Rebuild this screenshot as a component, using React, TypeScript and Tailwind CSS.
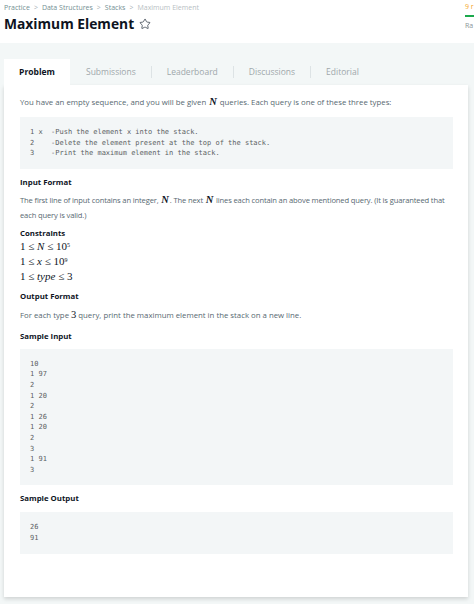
import { Star } from "lucide-react";

const sans = "font-['Open_Sans','Liberation_Sans',sans-serif]";
const mono = "font-['DejaVu_Sans_Mono','Liberation_Mono',monospace]";
const math = "font-['Liberation_Serif',serif]";

const tabs = ["Submissions", "Leaderboard", "Discussions", "Editorial"];

const sampleInput = ["10", "1 97", "2", "1 20", "2", "1 26", "1 20", "2", "3", "1 91", "3"];

function CodeBlock({ lines }: { lines: string[] }) {
  return (
    <pre
      className={`${mono} bg-[#f3f6f7] text-[#5b5f63] text-[7px] leading-[10.6px] px-[10px] py-[10px] whitespace-pre`}
    >
      {lines.join("\n")}
    </pre>
  );
}

function SectionTitle({ children }: { children: string }) {
  return <h3 className="text-[7.8px] font-bold text-[#0e141e] leading-[12px]">{children}</h3>;
}

function MathN() {
  return (
    <span className="inline-block px-[1px]">
      <i className={`${math} text-[10.5px] leading-none font-bold text-[#0e141e]`}>N</i>
    </span>
  );
}

export default function App() {
  return (
    <div className={`${sans} w-[474px] h-[604px] overflow-hidden bg-white flex flex-col`}>
      {/* Header */}
      <div className="relative h-[43px] px-[4px] pt-[3px]">
        <div className="flex items-center gap-[4px] text-[7px] leading-[9px] text-[#738f93]">
          <span>Practice</span>
          <span className="text-[#a8b2b5]">&gt;</span>
          <span>Data Structures</span>
          <span className="text-[#a8b2b5]">&gt;</span>
          <span>Stacks</span>
          <span className="text-[#a8b2b5]">&gt;</span>
          <span className="text-[#b7c0c3]">Maximum Element</span>
        </div>
        <div className="flex items-center gap-[5px] mt-[2px]">
          <h1 className="text-[13.8px] font-bold text-[#0e141e] leading-[20px]">Maximum Element</h1>
          <Star size={12} strokeWidth={1.6} className="text-[#39424e]" />
        </div>
        <div className="absolute left-[465px] top-[2px] w-[20px]">
          <div className="text-[7px] leading-[9px] text-[#f5a623]">9 r</div>
          <div className="h-[2px] bg-[#1ba94c] mt-[4px]" />
          <div className="text-[7px] leading-[9px] text-[#8a9497] mt-[4px]">Ra</div>
        </div>
      </div>

      {/* Body */}
      <div className="flex-1 bg-[#f3f7f7] px-[4px] pt-[16px]">
        <div className="flex items-stretch h-[26px]">
          <div className="w-[66px] bg-white flex items-center justify-center text-[8.5px] font-bold text-[#0e141e]">
            Problem
          </div>
          <div className="flex items-center pl-[16px]">
            {tabs.map((t, i) => (
              <div key={t} className="flex items-center">
                {i > 0 && <div className="w-px h-[12px] bg-[#dde3e5] mx-[15px]" />}
                <span className="text-[8.5px] text-[#a0a7ab]">{t}</span>
              </div>
            ))}
          </div>
        </div>

        <div className="w-[464px] h-[512px] bg-white shadow-[0_2px_4px_rgba(0,0,0,0.15)] px-[16px] pt-[10px] text-[#576871]">
          <p className="text-[7.8px] leading-[15px]">
            You have an empty sequence, and you will be given <MathN /> queries. Each query is one of these three types:
          </p>

          <div className="mt-[7px] w-[433px]">
            <CodeBlock
              lines={[
                "1 x  -Push the element x into the stack.",
                "2    -Delete the element present at the top of the stack.",
                "3    -Print the maximum element in the stack.",
              ]}
            />
          </div>

          <div className="mt-[7px]">
            <SectionTitle>Input Format</SectionTitle>
          </div>
          <p className="text-[7.6px] tracking-[-0.15px] leading-[15px] mt-[5px]">
            <span>The first line of input contains an integer, </span>
            <MathN />
            <span>. The next </span>
            <MathN />
            <span> lines each contain an above mentioned query. (It is guaranteed that</span>
            <br />
            <span>each query is valid.)</span>
          </p>

          <div className="mt-[4px]">
            <SectionTitle>Constraints</SectionTitle>
          </div>
          <div className={`${math} text-[11px] leading-[15px] text-[#0e141e]`}>
            <div>
              1 ≤ <i>N</i> ≤ 10<sup className="text-[6px]">5</sup>
            </div>
            <div>
              1 ≤ <i>x</i> ≤ 10<sup className="text-[6px]">9</sup>
            </div>
            <div>
              1 ≤ <i>type</i> ≤ 3
            </div>
          </div>

          <div className="mt-[6px]">
            <SectionTitle>Output Format</SectionTitle>
          </div>
          <p className="text-[7.8px] leading-[15px] mt-[6px]">
            For each type <span className={`${math} text-[10.5px] leading-none text-[#0e141e]`}>3</span> query, print
            the maximum element in the stack on a new line.
          </p>

          <div className="mt-[7px]">
            <SectionTitle>Sample Input</SectionTitle>
          </div>
          <div className="mt-[7px] w-[433px]">
            <CodeBlock lines={sampleInput} />
          </div>

          <div className="mt-[7px]">
            <SectionTitle>Sample Output</SectionTitle>
          </div>
          <div className="mt-[8px] w-[433px]">
            <CodeBlock lines={["26", "91"]} />
          </div>
        </div>
      </div>
    </div>
  );
}
